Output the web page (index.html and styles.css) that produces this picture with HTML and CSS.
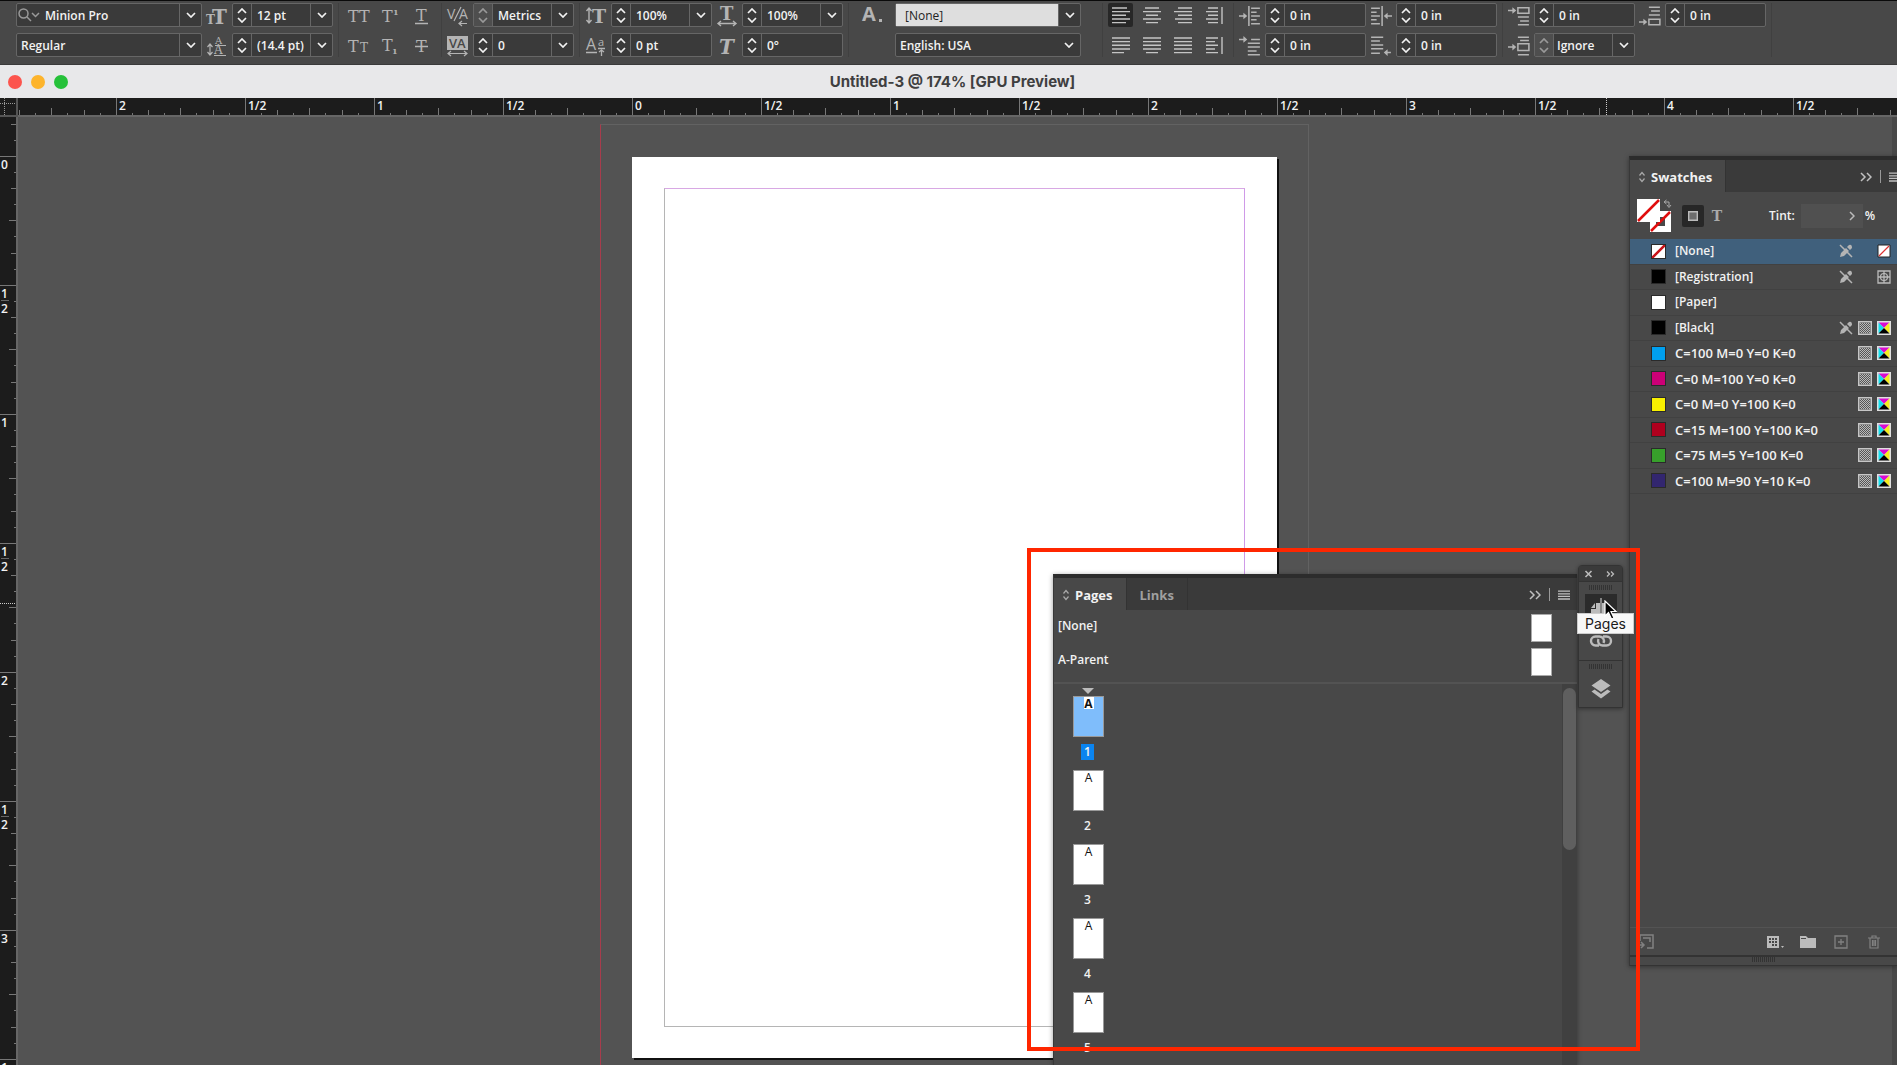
FILE: index.html
```html
<!DOCTYPE html>
<html lang="en">
<head>
<meta charset="utf-8">
<title>Untitled-3</title>
<link rel="stylesheet" href="styles.css">
</head>
<body>
<svg class="defs" aria-hidden="true">
  <symbol id="down" viewBox="0 0 10 6"><path d="M1 1l4 4 4-4" fill="none" stroke="currentColor" stroke-width="1.7"/></symbol>
  <symbol id="up" viewBox="0 0 10 6"><path d="M1 5l4-4 4 4" fill="none" stroke="currentColor" stroke-width="1.7"/></symbol>
  <symbol id="more" viewBox="0 0 12 10"><path d="M1 1l4 4-4 4M7 1l4 4-4 4" fill="none" stroke="currentColor" stroke-width="1.5"/></symbol>
  <symbol id="menu" viewBox="0 0 12 10"><path d="M0 1.2h12M0 3.8h12M0 6.4h12M0 9h12" stroke="currentColor" stroke-width="1.3"/></symbol>
  <symbol id="updown" viewBox="0 0 8 12"><path d="M1.500 4.500L4 1.500l2.500 3M1.500 7.500l2.500 3 2.500-3" fill="none" stroke="currentColor" stroke-width="1.2"/></symbol>
  <symbol id="al-left" viewBox="0 0 18 17"><path d="M0 1h15M0 4.600h18M0 8.300h14M0 12h18M0 15.600h14" stroke="currentColor" stroke-width="1.4"/></symbol>
  <symbol id="al-center" viewBox="0 0 18 17"><path d="M2 1h14M0 4.600h18M3 8.300h12M0 12h18M3 15.600h12" stroke="currentColor" stroke-width="1.4"/></symbol>
  <symbol id="al-right" viewBox="0 0 18 17"><path d="M4 1h14M0 4.600h18M4 8.300h14M1 12h17M4 15.600h14" stroke="currentColor" stroke-width="1.4"/></symbol>
  <symbol id="al-spine" viewBox="0 0 18 17"><path d="M3 1h10M1 4.600h12M3 8.300h10M1 12h12M3 15.600h10" stroke="currentColor" stroke-width="1.4"/><path d="M17 0v17" stroke="currentColor" stroke-width="1.4"/></symbol>
  <symbol id="ju-left" viewBox="0 0 18 17"><path d="M0 1h18M0 4.600h18M0 8.300h18M0 12h18M0 15.600h12" stroke="currentColor" stroke-width="1.4"/></symbol>
  <symbol id="ju-center" viewBox="0 0 18 17"><path d="M0 1h18M0 4.600h18M0 8.300h18M0 12h18M3 15.600h12" stroke="currentColor" stroke-width="1.4"/></symbol>
  <symbol id="ju-all" viewBox="0 0 18 17"><path d="M0 1h18M0 4.600h18M0 8.300h18M0 12h18M0 15.600h18" stroke="currentColor" stroke-width="1.4"/></symbol>
  <symbol id="ju-spine" viewBox="0 0 18 17"><path d="M1 1h12M1 4.600h9M1 8.300h12M1 12h9M1 15.600h12" stroke="currentColor" stroke-width="1.4"/><path d="M17 0v17" stroke="currentColor" stroke-width="1.4"/></symbol>
  <symbol id="in-left" viewBox="0 0 20 18"><path d="M0 9h6M9 0v18M11 2h8M11 5.500h5M11 9h8M11 12.500h5M11 16h8" fill="none" stroke="currentColor" stroke-width="1.4"/><path d="M4 6l3.500 3L4 12z" fill="currentColor"/></symbol>
  <symbol id="in-right" viewBox="0 0 20 18"><path d="M20 9h-6M11 0v18M1 2h8M1 5.500h5M1 9h8M1 12.500h5M1 16h8" fill="none" stroke="currentColor" stroke-width="1.4"/><path d="M16 6l-3.500 3 3.500 3z" fill="currentColor"/></symbol>
  <symbol id="in-first" viewBox="0 0 20 18"><path d="M0 3h6M11 3h8M8 6.500h11M8 10h11M8 13.500h8M8 17h11" stroke="currentColor" stroke-width="1.4"/><path d="M4 0l3.500 3L4 6z" fill="currentColor"/></symbol>
  <symbol id="in-last" viewBox="0 0 20 18"><path d="M1 1h11M1 4.500h8M1 8h11M1 11.500h11M1 15.500h8M19 15h-5" stroke="currentColor" stroke-width="1.4"/><path d="M16 12l-3.500 3 3.500 3z" fill="currentColor"/></symbol>
  <symbol id="sp-before" viewBox="0 0 20 18"><path d="M0 4h6M9 1.500h10v5H9zM9 10h10M11 13.500h8M9 17h10" fill="none" stroke="currentColor" stroke-width="1.4"/><path d="M4 1l3.500 3L4 7z" fill="currentColor"/></symbol>
  <symbol id="sp-after" viewBox="0 0 20 18"><path d="M0 14.500h6M9 12h10v5H9zM9 1h10M11 4.500h8M9 8h10" fill="none" stroke="currentColor" stroke-width="1.4"/><path d="M4 11.500l3.500 3-3.500 3z" fill="currentColor"/></symbol>
  <symbol id="sp-same" viewBox="0 0 20 18"><path d="M0 10h6M9 7h10v6H9zM9 1h10M11 4h8M9 17h10" fill="none" stroke="currentColor" stroke-width="1.4"/><path d="M4 7l3.500 3L4 13z" fill="currentColor"/></symbol>
  <symbol id="pencil" viewBox="0 0 14 14"><path d="M1 13l1-4 5-5 3 3-5 5zM8 3l2-2q3-1 3 3l-2 2z" fill="currentColor"/><path d="M1 1l12 12" stroke="currentColor" stroke-width="1.5"/></symbol>
  <symbol id="process" viewBox="0 0 14 14"><rect x=".75" y=".75" width="12.500" height="12.500" fill="#555" stroke="#c6c6c6" stroke-width="1.5"/><rect x="2" y="2" width="10" height="10" fill="url(#dots)"/></symbol>
  <symbol id="cmyk" viewBox="0 0 14 14"><path fill="#e0e0e0" d="M0 0h14v14H0z"/><path fill="#d90bd0" d="M1.500 1.500h11L7 7z"/><path fill="#13e0ee" d="M1.500 1.500v11L7 7z"/><path fill="#f5ee1d" d="M12.500 1.500v11L7 7z"/><path fill="#000" d="M1.500 12.500h11L7 7z"/></symbol>
  <defs><pattern id="dots" width="2" height="2" patternUnits="userSpaceOnUse"><path fill="#bbb" d="M0 0h1v1H0zM1 1h1v1H1z"/></pattern></defs>
</svg>

<header class="control-bar">
  <div class="group fonts">
    <div class="field search">
      <svg class="lens" viewBox="0 0 22 14"><circle cx="5.500" cy="5.500" r="4.500" fill="none" stroke="currentColor" stroke-width="1.500"/><path d="M9 9l4 4M14 5l3.500 3.500L21 5" fill="none" stroke="currentColor" stroke-width="1.500"/></svg>
      <input type="text" value="Minion Pro" aria-label="Font family">
      <button class="caret" aria-label="Font list"><svg><use href="#down"/></svg></button>
    </div>
    <div class="field drop"><select aria-label="Font style"><option>Regular</option></select><span class="caret"><svg><use href="#down"/></svg></span></div>
  </div>

  <div class="group pair">
    <svg class="tool" viewBox="0 0 22 20"><g class="slab bold"><text x="0" y="18" font-size="12">T</text><text x="6" y="18" font-size="20">T</text></g></svg>
    <div class="field"><span class="step"><button aria-label="Increase size"><svg><use href="#up"/></svg></button><button aria-label="Decrease size"><svg><use href="#down"/></svg></button></span><input type="text" value="12 pt" aria-label="Font size"><button class="caret" aria-label="Sizes"><svg><use href="#down"/></svg></button></div>
    <svg class="tool" viewBox="0 0 22 20"><g class="slab"><text x="9" y="8" font-size="10">A</text><text x="8" y="18" font-size="12">A</text></g><path d="M4 9v9M1.500 11L4 8l2.500 3M1.500 16L4 19l2.500-3M9 9.500h11M8 19.500h12" fill="none" stroke="currentColor" stroke-width="1.200"/></svg>
    <div class="field"><span class="step"><button aria-label="Increase leading"><svg><use href="#up"/></svg></button><button aria-label="Decrease leading"><svg><use href="#down"/></svg></button></span><input type="text" value="(14.4 pt)" aria-label="Leading"><button class="caret" aria-label="Leadings"><svg><use href="#down"/></svg></button></div>
  </div>
  <i class="sep"></i>
  <div class="group case">
    <button aria-label="All caps"><svg class="tool" viewBox="0 0 22 20"><g class="slab"><text x="0" y="16" font-size="16">T</text><text x="11" y="16" font-size="16">T</text></g></svg></button>
    <button aria-label="Superscript"><svg class="tool" viewBox="0 0 22 20"><g class="slab"><text x="3" y="16" font-size="16">T</text><text class="bold" x="14" y="9" font-size="8">1</text></g></svg></button>
    <button aria-label="Underline"><svg class="tool" viewBox="0 0 22 20"><g class="slab"><text x="6" y="15" font-size="16">T</text></g><path d="M5 17.500h13" stroke="currentColor" stroke-width="1.500"/></svg></button>
    <button aria-label="Small caps"><svg class="tool" viewBox="0 0 22 20"><g class="slab"><text x="0" y="16" font-size="16">T</text><text x="12" y="16" font-size="12">T</text></g></svg></button>
    <button aria-label="Subscript"><svg class="tool" viewBox="0 0 22 20"><g class="slab"><text x="3" y="15" font-size="16">T</text><text class="bold" x="13" y="18" font-size="8">1</text></g></svg></button>
    <button aria-label="Strikethrough"><svg class="tool" viewBox="0 0 22 20"><g class="slab"><text x="6" y="16" font-size="16">T</text></g><path d="M5 10.500h13" stroke="currentColor" stroke-width="1.500"/></svg></button>
  </div>
  <i class="sep"></i>
  <div class="group pair">
    <svg class="tool" viewBox="0 0 22 20"><g class="sans"><text x="0" y="13" font-size="14">V</text><text x="12" y="13" font-size="14">A</text></g><path d="M7 15l7-14M12 17.500h8M15 15l-3 2.500 3 2.500" fill="none" stroke="currentColor" stroke-width="1.200"/></svg>
    <div class="field"><span class="step off"><button aria-label="Increase kerning"><svg><use href="#up"/></svg></button><button aria-label="Decrease kerning"><svg><use href="#down"/></svg></button></span><input type="text" value="Metrics" aria-label="Kerning"><button class="caret" aria-label="Kerning values"><svg><use href="#down"/></svg></button></div>
    <svg class="tool" viewBox="0 0 22 20"><path d="M0 0h21v14H0z" fill="currentColor"/><g class="sans cut"><text x="2" y="12" font-size="13">V</text><text x="10" y="12" font-size="13">A</text></g><path d="M1 17.500h19M4 15l-3 2.500L4 20M17 15l3 2.500-3 2.500" fill="none" stroke="currentColor" stroke-width="1.200"/></svg>
    <div class="field"><span class="step"><button aria-label="Increase tracking"><svg><use href="#up"/></svg></button><button aria-label="Decrease tracking"><svg><use href="#down"/></svg></button></span><input type="text" value="0" aria-label="Tracking"><button class="caret" aria-label="Tracking values"><svg><use href="#down"/></svg></button></div>
  </div>
  <i class="sep"></i>
  <div class="group pair">
    <svg class="tool" viewBox="0 0 22 20"><g class="slab bold"><text x="7" y="17" font-size="19">T</text></g><path d="M4 2v15M1.500 5L4 2l2.500 3M1.500 14L4 17l2.500-3" fill="none" stroke="currentColor" stroke-width="1.400"/></svg>
    <div class="field"><span class="step"><button aria-label="Increase vertical scale"><svg><use href="#up"/></svg></button><button aria-label="Decrease vertical scale"><svg><use href="#down"/></svg></button></span><input type="text" value="100%" aria-label="Vertical scale"><button class="caret" aria-label="Vertical scales"><svg><use href="#down"/></svg></button></div>
    <svg class="tool" viewBox="0 0 22 20"><g class="sans"><text x="1" y="14" font-size="16">A</text><text x="13" y="10" font-size="11">a</text></g><path d="M1 16.500h11M13 12.500h7M16.500 20v-6M14 16l2.500-2 2.500 2" fill="none" stroke="currentColor" stroke-width="1.300"/></svg>
    <div class="field"><span class="step"><button aria-label="Raise baseline"><svg><use href="#up"/></svg></button><button aria-label="Lower baseline"><svg><use href="#down"/></svg></button></span><input type="text" value="0 pt" aria-label="Baseline shift"></div>
  </div>
  <div class="group pair">
    <svg class="tool" viewBox="0 0 22 20"><g class="slab bold"><text x="4" y="14" font-size="18">T</text></g><path d="M2 17.500h18M5 15l-3 2.500L5 20M17 15l3 2.500-3 2.500" fill="none" stroke="currentColor" stroke-width="1.400"/></svg>
    <div class="field"><span class="step"><button aria-label="Increase horizontal scale"><svg><use href="#up"/></svg></button><button aria-label="Decrease horizontal scale"><svg><use href="#down"/></svg></button></span><input type="text" value="100%" aria-label="Horizontal scale"><button class="caret" aria-label="Horizontal scales"><svg><use href="#down"/></svg></button></div>
    <svg class="tool" viewBox="0 0 22 20"><g class="slab bold italic"><text x="3" y="18" font-size="20">T</text></g></svg>
    <div class="field"><span class="step"><button aria-label="Increase skew"><svg><use href="#up"/></svg></button><button aria-label="Decrease skew"><svg><use href="#down"/></svg></button></span><input type="text" value="0°" aria-label="Skew"></div>
  </div>
  <i class="sep"></i>
  <div class="group styles">
    <svg class="tool" viewBox="0 0 22 20"><g class="sans bold"><text x="0" y="17" font-size="20">A</text></g><path d="M17 15h3v3h-3z" fill="currentColor"/></svg>
    <div class="field drop light"><select aria-label="Character style"><option>[None]</option></select><span class="caret"><svg><use href="#down"/></svg></span></div>
    <div class="field drop plain"><select aria-label="Language"><option>English: USA</option></select><span class="caret"><svg><use href="#down"/></svg></span></div>
  </div>
  <i class="sep"></i>
  <div class="group align">
    <button class="on" aria-label="Align left"><svg><use href="#al-left"/></svg></button>
    <button aria-label="Align center"><svg><use href="#al-center"/></svg></button>
    <button aria-label="Align right"><svg><use href="#al-right"/></svg></button>
    <button aria-label="Align towards spine"><svg><use href="#al-spine"/></svg></button>
    <button aria-label="Justify left"><svg><use href="#ju-left"/></svg></button>
    <button aria-label="Justify center"><svg><use href="#ju-center"/></svg></button>
    <button aria-label="Justify all"><svg><use href="#ju-all"/></svg></button>
    <button aria-label="Align away from spine"><svg><use href="#ju-spine"/></svg></button>
  </div>
  <i class="sep"></i>
  <div class="group pair">
    <svg class="tool"><use href="#in-left"/></svg>
    <div class="field"><span class="step"><button aria-label="More"><svg><use href="#up"/></svg></button><button aria-label="Less"><svg><use href="#down"/></svg></button></span><input type="text" value="0 in" aria-label="Left indent"></div>
    <svg class="tool"><use href="#in-first"/></svg>
    <div class="field"><span class="step"><button aria-label="More"><svg><use href="#up"/></svg></button><button aria-label="Less"><svg><use href="#down"/></svg></button></span><input type="text" value="0 in" aria-label="First line indent"></div>
  </div>
  <div class="group pair">
    <svg class="tool"><use href="#in-right"/></svg>
    <div class="field"><span class="step"><button aria-label="More"><svg><use href="#up"/></svg></button><button aria-label="Less"><svg><use href="#down"/></svg></button></span><input type="text" value="0 in" aria-label="Right indent"></div>
    <svg class="tool"><use href="#in-last"/></svg>
    <div class="field"><span class="step"><button aria-label="More"><svg><use href="#up"/></svg></button><button aria-label="Less"><svg><use href="#down"/></svg></button></span><input type="text" value="0 in" aria-label="Last line indent"></div>
  </div>
  <i class="sep"></i>
  <div class="group pair">
    <svg class="tool"><use href="#sp-before"/></svg>
    <div class="field"><span class="step"><button aria-label="More"><svg><use href="#up"/></svg></button><button aria-label="Less"><svg><use href="#down"/></svg></button></span><input type="text" value="0 in" aria-label="Space before"></div>
    <svg class="tool"><use href="#sp-same"/></svg>
    <div class="field"><span class="step off"><button aria-label="More"><svg><use href="#up"/></svg></button><button aria-label="Less"><svg><use href="#down"/></svg></button></span><input class="tight" type="text" value="Ignore" aria-label="Space between same style"><button class="caret" aria-label="Spacing values"><svg><use href="#down"/></svg></button></div>
  </div>
  <div class="group pair">
    <svg class="tool"><use href="#sp-after"/></svg>
    <div class="field"><span class="step"><button aria-label="More"><svg><use href="#up"/></svg></button><button aria-label="Less"><svg><use href="#down"/></svg></button></span><input type="text" value="0 in" aria-label="Space after"></div>
  </div>
  <i class="sep"></i>
</header>

<div class="title-bar">
  <div class="lights"><button class="red" aria-label="Close"></button><button class="amber" aria-label="Minimize"></button><button class="green" aria-label="Zoom"></button></div>
  <h1>Untitled-3 @ 174% [GPU Preview]</h1>
</div>

<main class="workspace">
  <div class="corner"><svg viewBox="0 0 16 17"><path d="M0 5.500h16M4.500 0v17" stroke="#999" stroke-dasharray="1 1"/></svg></div>
  <div class="ruler-x">
    <svg class="ticks" aria-hidden="true"><defs><pattern id="tx" x="98" width="129" height="17" patternUnits="userSpaceOnUse"><path d="M.5 0v17M16.500 15v2M32.500 12v5M48.500 15v2M64.500 10v7M80.500 15v2M97.500 12v5M113.500 15v2" stroke="#777"/></pattern></defs><rect width="100%" height="17" fill="url(#tx)"/><path d="M1588.500 0v17" stroke="#ccc" stroke-dasharray="1 1"/></svg>
    <ol><li>2</li><li>1/2</li><li>1</li><li>1/2</li><li>0</li><li>1/2</li><li>1</li><li>1/2</li><li>2</li><li>1/2</li><li>3</li><li>1/2</li><li>4</li><li>1/2</li></ol>
  </div>
  <div class="ruler-y">
    <svg class="ticks" aria-hidden="true"><defs><pattern id="ty" y="39" width="16" height="129" patternUnits="userSpaceOnUse"><path d="M0 .5h16M14 16.500h2M11 32.500h5M14 48.500h2M9 64.500h7M14 80.500h2M11 97.500h5M14 113.500h2" stroke="#777"/></pattern></defs><rect width="16" height="100%" fill="url(#ty)"/><path d="M0 486.500h16" stroke="#ccc" stroke-dasharray="1 1"/></svg>
    <ol><li>0</li><li><span class="half">1</span>2</li><li>1</li><li><span class="half">1</span>2</li><li>2</li><li><span class="half">1</span>2</li><li>3</li><li><span class="half">1</span></li></ol>
  </div>
  <div class="pasteboard">
    <div class="bleed"></div>
    <div class="page"><div class="margins"></div></div>
  </div>

  <section class="panel swatches">
    <div class="tabs"><button class="tab on"><svg class="ud"><use href="#updown"/></svg>Swatches</button><span class="tab-tools"><svg class="more"><use href="#more"/></svg><i></i><svg class="menu"><use href="#menu"/></svg></span></div>
    <div class="swatch-tools">
      <svg class="fillstroke" viewBox="0 0 36 34"><path d="M13 12h21v21H13z" fill="#fff"/><path d="M19 18h9v9h-9z" fill="#484848"/><path d="M14 32L33 13" stroke="#e00d0d" stroke-width="2.500"/><path d="M0 0h23v23H0z" fill="#fff"/><path d="M1 22L22 1" stroke="#e00d0d" stroke-width="2.500"/><path d="M28 3h4v4M29.500 1L27 3l2.500 2M30 6l2 2.500L34 6" fill="none" stroke="#aaa"/></svg>
      <button class="target on" aria-label="Formatting affects container"><svg viewBox="0 0 10 10"><path d="M.7.700h8.600v8.600H.7z" fill="#6c6c6c" stroke="#bbb" stroke-width="1.400"/></svg></button>
      <button class="target slabtext" aria-label="Formatting affects text">T</button>
      <label for="tint">Tint:</label>
      <span class="tint"><input id="tint" type="text"><svg viewBox="0 0 6 10"><path d="M1 1l4 4-4 4" fill="none" stroke="currentColor" stroke-width="1.500"/></svg></span><span>%</span>
    </div>
    <ul class="swatch-list">
      <li class="on"><i class="chip none"></i><span>[None]</span><svg class="c1"><use href="#pencil"/></svg><svg class="c3" viewBox="0 0 14 14"><path d="M1 1h12v12H1z" fill="#fff" stroke="#222"/><path d="M2 12L12 2" stroke="#d33" stroke-width="1.200"/></svg></li>
      <li><i class="chip" style="background:#000"></i><span>[Registration]</span><svg class="c1"><use href="#pencil"/></svg><svg class="c3" viewBox="0 0 14 14"><path d="M1 1h12v12H1zM7 1v12M1 7h12" fill="none" stroke="#bbb" stroke-width="1.300"/><circle cx="7" cy="7" r="3.500" fill="none" stroke="#bbb" stroke-width="1.200"/></svg></li>
      <li><i class="chip" style="background:#fff"></i><span>[Paper]</span></li>
      <li><i class="chip" style="background:#000"></i><span>[Black]</span><svg class="c1"><use href="#pencil"/></svg><svg class="c2"><use href="#process"/></svg><svg class="c3"><use href="#cmyk"/></svg></li>
      <li class="mix"><i class="chip" style="background:#009fee"></i><span>C=100 M=0 Y=0 K=0</span><svg class="c2"><use href="#process"/></svg><svg class="c3"><use href="#cmyk"/></svg></li>
      <li class="mix"><i class="chip" style="background:#cc0077"></i><span>C=0 M=100 Y=0 K=0</span><svg class="c2"><use href="#process"/></svg><svg class="c3"><use href="#cmyk"/></svg></li>
      <li class="mix"><i class="chip" style="background:#f8f000"></i><span>C=0 M=0 Y=100 K=0</span><svg class="c2"><use href="#process"/></svg><svg class="c3"><use href="#cmyk"/></svg></li>
      <li class="mix"><i class="chip" style="background:#b0001e"></i><span>C=15 M=100 Y=100 K=0</span><svg class="c2"><use href="#process"/></svg><svg class="c3"><use href="#cmyk"/></svg></li>
      <li class="mix"><i class="chip" style="background:#37a02b"></i><span>C=75 M=5 Y=100 K=0</span><svg class="c2"><use href="#process"/></svg><svg class="c3"><use href="#cmyk"/></svg></li>
      <li class="mix"><i class="chip" style="background:#32266f"></i><span>C=100 M=90 Y=10 K=0</span><svg class="c2"><use href="#process"/></svg><svg class="c3"><use href="#cmyk"/></svg></li>
    </ul>
    <div class="swatch-foot">
      <button class="dim first" aria-label="Add to library"><svg viewBox="0 0 18 16"><path d="M3 7V1h13v13h-6M6 4h7v4" fill="none" stroke="currentColor" stroke-width="1.500"/><path d="M0 11h7M4 8l3 3-3 3" fill="none" stroke="currentColor" stroke-width="1.500"/></svg></button>
      <button aria-label="Swatch views"><svg viewBox="0 0 18 16"><path d="M1 2h12v12H1z" fill="currentColor"/><path d="M3 4h2v2H3zM6 4h2v2H6zM9 4h2v2H9zM3 7h2v2H3zM6 7h2v2H6zM9 7h2v2H9zM6 10h2v2H6zM9 10h2v2H9z" fill="#484848"/><path d="M15 12h3l-1.500 2z" fill="currentColor"/></svg></button>
      <button aria-label="New color group"><svg viewBox="0 0 18 16"><path d="M1 2h6l2 2h8v10H1z" fill="currentColor"/><path d="M2 4.500h5" stroke="#484848"/></svg></button>
      <button class="dim" aria-label="New swatch"><svg viewBox="0 0 18 16"><path d="M3 2h12v12H3zM9 5v6M6 8h6" fill="none" stroke="currentColor" stroke-width="1.300"/></svg></button>
      <button class="dim" aria-label="Delete swatch"><svg viewBox="0 0 18 16"><path d="M3 4h12M7 4V2h4v2M5 4v10h8V4M7.500 6v6M9 6v6M10.500 6v6" fill="none" stroke="currentColor" stroke-width="1.200"/></svg></button>
    </div>
    <div class="grip"><i></i></div>
  </section>

  <section class="panel pages">
    <div class="tabs"><button class="tab on"><svg class="ud"><use href="#updown"/></svg>Pages</button><button class="tab">Links</button><span class="tab-tools"><svg class="more"><use href="#more"/></svg><i></i><svg class="menu"><use href="#menu"/></svg></span></div>
    <ul class="parents"><li>[None]<i></i></li><li>A-Parent<i></i></li></ul>
    <div class="page-scroll">
      <ol class="page-list">
        <li class="on"><b><em>A</em></b><span>1</span></li>
        <li><b><em>A</em></b><span>2</span></li>
        <li><b><em>A</em></b><span>3</span></li>
        <li><b><em>A</em></b><span>4</span></li>
        <li><b><em>A</em></b><span>5</span></li>
      </ol>
      <div class="scrollbar"><i></i></div>
    </div>
  </section>

  <aside class="dock">
    <div class="dock-head"><svg viewBox="0 0 8 8"><path d="M1 1l6 6M7 1L1 7" stroke="currentColor" stroke-width="1.600"/></svg><svg viewBox="0 0 9 7"><path d="M1 1l2.500 2.500L1 6M5 1l2.500 2.500L5 6" fill="none" stroke="currentColor" stroke-width="1.300"/></svg></div>
    <div class="dock-set two"><i class="ridge"></i>
      <button class="on" aria-label="Pages"><svg viewBox="0 0 24 24"><path d="M2 20V11h5V5h4v15zM13 5h3q6 1 6 7v8h-9z" fill="currentColor"/><path d="M2 10l4-5v5z" fill="currentColor"/><path d="M12 0v21" stroke="#ddd"/></svg></button>
      <button aria-label="Links"><svg viewBox="0 0 24 24"><g fill="none" stroke="currentColor" stroke-width="2.400"><path d="M10 16.500H6.500a4.500 4.500 0 0 1 0-9h4a4.500 4.500 0 0 1 4 6.500"/><path d="M14 7.500h3.500a4.500 4.500 0 0 1 0 9h-4a4.500 4.500 0 0 1-4-6.500"/></g></svg></button>
    </div>
    <div class="dock-set"><i class="ridge"></i>
      <button aria-label="Layers"><svg viewBox="0 0 24 24"><path d="M12 2l9.500 6.500L12 15 2.500 8.500zM2.500 14.500L5.500 12.500 12 17l6.500-4.500 3 2L12 21.500z" fill="currentColor"/></svg></button>
    </div>
  </aside>
  <div class="tooltip" role="tooltip">Pages</div>
  <svg class="pointer" viewBox="0 0 14 20"><path d="M1 1v15l3.500-3.500 3 6.500 2.500-1-3-6.500h5z" fill="#000" stroke="#fff" stroke-width="1.200"/></svg>
  <div class="callout"></div>
</main>
</body>
</html>
```

FILE: styles.css
```css
* { box-sizing: border-box; }
body { margin: 0; height: 100vh; display: flex; flex-direction: column; overflow: hidden; background: #535353; color: #f2f2f2; font: 600 12px/16px "Open Sans", "Noto Sans", sans-serif; }
button, input, select { margin: 0; padding: 0; border: 0; border-radius: 0; background: none; color: inherit; font: inherit; }
button { display: grid; place-items: center; }
ul, ol { margin: 0; padding: 0; list-style: none; }
svg { display: block; }
.defs { position: absolute; width: 0; height: 0; }

/* Control bar */
.control-bar { display: flex; flex: none; gap: 4px; height: 65px; padding: 2px 0 0 16px; background: #484848; border-top: 1px solid #0a0a0a; border-bottom: 1px solid #3a3a3a; }
.group { display: grid; flex: none; grid-template-rows: 24px 24px; row-gap: 6px; align-content: start; }
.fonts { width: 186px; }
.pair { grid-template-columns: 22px 101px; column-gap: 4px; align-items: center; }
.case { width: 92px; grid-template-columns: repeat(3, 1fr); color: #b4b4b4; }
.styles { grid-template-columns: 22px 186px; column-gap: 11px; padding-left: 8px; margin-right: 16px; }
.styles .plain { grid-column: 2; }
.align { grid-template-columns: repeat(4, 25px); column-gap: 6px; padding-right: 2px; color: #c4c4c4; }
.align button { border-radius: 2px; }
.align svg { width: 18px; height: 17px; }
.align .on { background: #272727; }
.sep { flex: none; width: 1px; height: 54px; margin: 0 1px; background: #404040; }
.tool { width: 22px; height: 20px; margin-top: 1px; color: #b4b4b4; overflow: visible; }
.tool text { fill: currentColor; }
.slab { font-family: "DejaVu Serif", serif; font-weight: 400; }
.sans { font-family: "Open Sans", sans-serif; font-weight: 400; }
.bold { font-weight: 700; }
.italic { font-style: italic; }
.cut { color: #484848; font-weight: 600; }
.field { display: flex; height: 24px; min-width: 0; border: 1px solid #666; border-radius: 2px; background: #3a3a3a; }
.field input, .field select { flex: 1; min-width: 0; width: 0; padding-top: 1px; padding-left: 5px; outline: 0; }
.field select { appearance: none; padding-left: 4px; }
.step { display: grid; flex: none; width: 19px; padding: 2px 0; border-right: 1px solid #666; }
.step svg, .caret svg { width: 10px; height: 6px; }
.step.off { background: #4e4e4e; color: #999; }
.caret { display: grid; place-items: center; flex: none; width: 22px; border-left: 1px solid #666; }
.lens { align-self: center; width: 22px; height: 14px; margin-left: 1px; color: #999; }
.field.light select { background: #dedede; color: #222; font-weight: 400; padding-left: 9px; }
.plain .caret { border-left: 0; }
.field .tight { padding-left: 3px; }

/* Document title */
.title-bar { display: grid; grid-template-columns: 1fr auto 1fr; align-items: center; flex: none; height: 33px; padding-left: 8px; background: #e8e8ea; color: #3f3f40; }
.title-bar h1 { margin: 0; font: 700 15px/20px Inter, sans-serif; }
.lights { display: flex; gap: 9px; }
.lights button { width: 14px; height: 14px; border-radius: 50%; }
.red { background: #fc544d; }
.amber { background: #fdb42c; }
.green { background: #26c13a; }

/* Workspace */
.workspace { position: relative; display: grid; flex: 1; min-height: 0; grid-template: 19px 1fr / 18px 1fr; overflow: hidden; }
.corner, .ruler-x, .ruler-y { background: #1c1c1c; overflow: hidden; }
.corner { border-right: 2px solid #555; border-bottom: 2px solid #555; }
.ruler-x { display: grid; border-bottom: 2px solid #666; }
.ruler-y { display: grid; border-right: 2px solid #666; }
.ticks { grid-area: 1 / 1; width: 100%; height: 100%; }
.ruler-x ol { grid-area: 1 / 1; display: flex; padding-left: 101px; }
.ruler-x li { flex: none; width: 129px; line-height: 15px; }
.ruler-y ol { grid-area: 1 / 1; padding-top: 40px; }
.ruler-y li { height: 129px; padding-left: 1px; line-height: 16px; }
.half { display: block; width: 8px; height: 15px; line-height: 15px; border-bottom: 1px solid #666; }
.pasteboard { position: relative; background: #535353; border-right: 5px solid #484848; }
.bleed { position: absolute; left: 582px; top: 7px; bottom: 0; width: 709px; border: 1px solid #626262; border-left-color: #a83c4c; border-bottom: 0; }
.page { position: absolute; left: 614px; top: 40px; width: 645px; height: 901px; padding: 31px 32px; background: #fff; box-shadow: 2px 2px #111; }
.margins { height: 100%; border: 1px solid #b5b5b5; border-top-color: #d8a8e4; border-right-color: #cf9ae8; }

/* Panels */
.panel { position: absolute; display: flex; flex-direction: column; background: #484848; border-top: 4px solid #2c2c2c; border-left: 1px solid #383838; box-shadow: 0 1px 5px #0006; }
.tabs { display: flex; flex: none; height: 32px; background: #3a3a3a; font-size: 13px; }
.tab { display: flex; align-items: center; padding: 1px 13px 0; border-right: 1px solid #333; color: #a0a0a0; font-weight: 700; }
.tab.on { padding-left: 8px; gap: 5px; background: #484848; color: #f2f2f2; }
.ud { width: 8px; height: 12px; color: #aaa; }
.tab-tools { display: flex; align-items: center; gap: 8px; margin-left: auto; padding: 1px 7px 0 0; color: #c0c0c0; }
.tab-tools i { width: 1px; height: 13px; background: #999; }
.more { width: 12px; height: 10px; }
.menu { width: 12px; height: 10px; }

.swatches { top: 58px; right: 0; width: 268px; height: 810px; }
.swatches .tab-tools { margin-right: -11px; }
.swatch-tools { display: flex; align-items: center; height: 47px; padding-left: 7px; }
.fillstroke { width: 36px; height: 34px; }
.target { width: 22px; height: 22px; margin-left: 9px; border-radius: 2px; }
.target.on { background: #272727; }
.target svg { width: 10px; height: 10px; }
.target.slabtext { margin-left: 2px; font: 700 14px/16px "DejaVu Serif", serif; color: #aaa; }
.swatch-tools label { margin-left: 41px; }
.tint { display: flex; align-items: center; width: 62px; height: 24px; margin: 0 2px 0 6px; padding-right: 8px; background: #505050; color: #bbb; }
.tint input { flex: 1; width: 0; }
.tint svg { width: 6px; height: 10px; }
.swatch-list { display: grid; grid-auto-rows: 1fr; height: 255px; }
.swatch-list li { display: grid; grid-template-columns: 15px 1fr 14px 14px 14px; column-gap: 5px; align-items: center; padding: 0 6px 0 21px; border-bottom: 1px solid #414141; }
.swatch-list li.on { background: #40607c; }
.swatch-list li > * { grid-row: 1; }
.swatch-list span { padding-left: 4px; }
.swatch-list .mix { font-size: 13px; }
.swatch-list svg { width: 14px; height: 14px; color: #b4b4b4; }
.c1 { grid-column: 3; }
.c2 { grid-column: 4; }
.c3 { grid-column: 5; }
.chip { height: 15px; border: 1px solid #2a2a2a; }
.chip.none { background: linear-gradient(135deg, #fff 42%, #c8141a 43%, #c8141a 57%, #fff 58%); }
.swatch-foot { display: flex; align-items: center; gap: 15px; height: 30px; margin-top: auto; padding-right: 14px; border-top: 1px solid #535353; border-bottom: 2px solid #333; color: #bbb; }
.swatch-foot svg { width: 18px; height: 16px; }
.swatch-foot .first { margin: 0 auto 0 7px; }
.dim { color: #818181; }
.grip { display: grid; justify-content: center; height: 9px; border-bottom: 1px solid #333; }
.grip i, .ridge { width: 23px; height: 5px; background: repeating-linear-gradient(90deg, #333 0 1px, #484848 1px 2px); }

.pages { top: 476px; right: 320px; bottom: 0; width: 524px; overflow: hidden; }
.parents { flex: none; height: 74px; padding-top: 4px; border-bottom: 2px solid #535353; }
.parents li { display: flex; justify-content: space-between; height: 34px; padding: 0 25px 0 4px; line-height: 24px; }
.parents i { width: 21px; height: 28px; background: #fff; border: 1px solid #aaa; }
.page-scroll { display: flex; flex: 1; min-height: 0; justify-content: space-between; }
.page-list { padding: 12px 0 0 19px; overflow: hidden; }
.page-list li { display: grid; grid-template-rows: 41px 16px; justify-items: center; row-gap: 7px; width: 31px; height: 74px; }
.page-list b { width: 31px; border: 1px solid #999; background: #fff; color: #111; font-weight: 400; line-height: 14px; text-align: center; }
.page-list em { display: inline-block; width: 10px; height: 12px; line-height: 13px; font-style: normal; }
.page-list span { margin-right: 2px; padding: 0 3px; }
.page-list .on { position: relative; }
.page-list .on b { background: #7fbdfb; font-weight: 700; }
.page-list .on em { background: #fff; }
.page-list .on span { background: #0a84f0; }
.page-list .on::before { content: ""; position: absolute; top: -8px; left: 9px; border: 6px solid transparent; border-top-color: #bbb; border-bottom: 0; }
.scrollbar { flex: none; width: 15px; padding: 4px 1px; background: #404040; }
.scrollbar i { display: block; height: 162px; border-radius: 7px; background: #5f5f5f; }

.dock { position: absolute; top: 467px; right: 274px; width: 45px; border: 1px solid #333; border-radius: 4px 4px 0 0; background: #484848; box-shadow: 0 1px 4px #0006; color: #bbb; }
.dock-head { display: flex; justify-content: space-between; align-items: center; height: 15px; padding: 0 7px 0 5px; background: #3a3a3a; }
.dock-head svg { width: 9px; height: 8px; }
.dock-set { display: grid; justify-items: center; align-content: start; height: 47px; padding-top: 3px; border-top: 1px solid #333; }
.dock-set.two { height: 79px; }
.dock-set button { width: 32px; height: 31px; margin-top: 4px; }
.dock-set.two button + button { margin-top: 0; }
.dock-set button svg { width: 24px; height: 24px; }
.dock-set .on { background: #2b2b2b; }
.tooltip { position: absolute; top: 515px; right: 263px; width: 57px; height: 21px; background: #f8f8f8; border: 1px solid #ccc; color: #1a1a1a; font: 400 14px/19px Inter, sans-serif; text-align: center; }
.pointer { position: absolute; top: 502px; right: 279px; width: 14px; height: 20px; }
.callout { position: absolute; top: 450px; right: 257px; width: 613px; height: 503px; border: 4px solid #ff2600; }
```
